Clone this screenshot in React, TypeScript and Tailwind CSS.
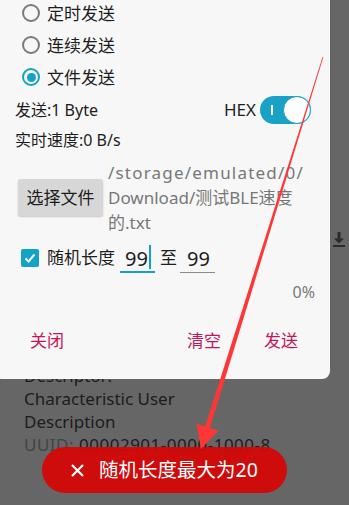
import React from "react";

const font = { fontFamily: "'Noto Sans', 'Noto Sans CJK SC', sans-serif" };

function Radio({ label, checked }: { label: string; checked?: boolean }) {
  return (
    <div className="flex h-8 items-center gap-[7px]">
      <span
        className={
          "flex h-[18px] w-[18px] items-center justify-center rounded-full border-2 " +
          (checked ? "border-[#13a3c7]" : "border-[#7a7a7a]")
        }
      >
        {checked && <span className="h-[9px] w-[9px] rounded-full bg-[#13a3c7]" />}
      </span>
      <span className="text-[17px] leading-none text-[#1e1e1e]">{label}</span>
    </div>
  );
}

export default function App() {
  return (
    <div className="relative h-[505px] w-[349px] overflow-hidden bg-[#666666]" style={font}>
      {/* page behind the dialog */}
      <div className="px-[24px] pt-[364px] text-[17px] leading-[23px] text-[#1c1c1c]">
        <div>Descriptor:</div>
        <div>Characteristic User</div>
        <div>Description</div>
        <div className="whitespace-nowrap tracking-[0.5px]">
          <span className="text-[#444]">UUID: </span>00002901-0000-1000-8
        </div>
      </div>
      <svg className="absolute left-[333px] top-[232px]" width="12" height="15" viewBox="0 0 12 15">
        <rect x="4.5" y="0" width="3" height="7" fill="#2b2b2b" />
        <polygon points="1,6.5 11,6.5 6,11.5" fill="#2b2b2b" />
        <rect x="0" y="13" width="12" height="2" fill="#2b2b2b" />
      </svg>

      {/* dialog */}
      <div className="absolute left-[-6px] top-0 flex h-[379px] w-[336px] flex-col rounded-b-lg bg-[#f7f7f7] text-[#1e1e1e]">
        <div className="mt-[-3px] flex flex-col pl-[28px]">
          <Radio label="定时发送" />
          <Radio label="连续发送" />
          <Radio label="文件发送" checked />
        </div>

        <div className="flex h-[34px] items-center justify-between pl-[21px] pr-[19px]">
          <span className="text-[16px]">发送:1 Byte</span>
          <div className="flex items-center gap-[4px]">
            <span className="text-[17px] text-[#1e1e1e]">HEX</span>
            <div className="relative flex h-[28px] w-[51px] items-center rounded-full bg-[#19a2c6]">
              <span className="ml-[11px] h-[10px] w-[1.5px] bg-white" />
              <span className="absolute right-0 top-0 h-[28px] w-[28px] rounded-full border border-[#19a2c6] bg-white" />
            </div>
          </div>
        </div>

        <div className="flex h-[26px] items-center pl-[21px] text-[16px]">实时速度:0 B/s</div>

        <div className="flex items-center pl-[24px] pt-[7px]">
          <div className="flex h-[37px] w-[85px] items-center justify-center rounded-[3px] bg-[#d7d7d7] text-[17px] text-[#1e1e1e] shadow-[0_1px_2px_rgba(0,0,0,0.2)]">
            选择文件
          </div>
          <div className="ml-[5px] text-[17px] leading-[25px] text-[#777777]">
            <div className="tracking-[1.2px]">/storage/emulated/0/</div>
            <div>Download/测试BLE速度</div>
            <div>的.txt</div>
          </div>
        </div>

        <div className="flex h-[46px] items-center pl-[27px]">
          <span className="flex h-[18px] w-[18px] items-center justify-center rounded-[2px] bg-[#13a3c7]">
            <svg width="14" height="14" viewBox="0 0 14 14">
              <polyline points="2.5,7.5 5.5,10.5 11.5,3.5" fill="none" stroke="white" strokeWidth="2" />
            </svg>
          </span>
          <span className="ml-[8px] text-[17px]">随机长度</span>
          <div className="ml-[5px] flex h-[30px] w-[35px] items-end border-b-2 border-[#13a3c7] pb-[2px] pl-[5px] text-[20px] leading-none">
            99
            <span className="ml-[1px] h-[24px] w-[2px] bg-[#13a3c7]" />
          </div>
          <span className="ml-[5px] text-[17px]">至</span>
          <div className="ml-[3px] flex h-[30px] w-[35px] items-end border-b border-[#8a8a8a] pb-[3px] pl-[7px] text-[20px] leading-none">
            99
          </div>
        </div>

        <div className="flex h-[22px] items-center justify-end pr-[15px] text-[16px] text-[#777777]">0%</div>

        <div className="flex h-[76px] items-center justify-between pl-[36px] pr-[32px] text-[17px] text-[#c2185b]">
          <span>关闭</span>
          <div className="flex gap-[43px]">
            <span>清空</span>
            <span>发送</span>
          </div>
        </div>
      </div>

      {/* toast */}
      <div className="absolute left-[42px] top-[447px] flex h-[46px] w-[245px] items-center justify-center gap-[15px] rounded-full bg-[rgba(212,6,6,0.94)] text-white">
        <svg width="13" height="13" viewBox="0 0 13 13">
          <path d="M1 1 L12 12 M12 1 L1 12" stroke="white" strokeWidth="2.2" />
        </svg>
        <span className="text-[19.5px] leading-none">随机长度最大为20</span>
      </div>

      {/* annotation arrow */}
      <svg className="pointer-events-none absolute inset-0" width="349" height="505" viewBox="0 0 349 505">
        <polygon points="322.6,57 323.4,57 210,427.7 205.2,426.2" fill="#ff3636" />
        <polygon points="196.5,423.5 218.5,430.5 201,449" fill="#ff3636" />
      </svg>
    </div>
  );
}
